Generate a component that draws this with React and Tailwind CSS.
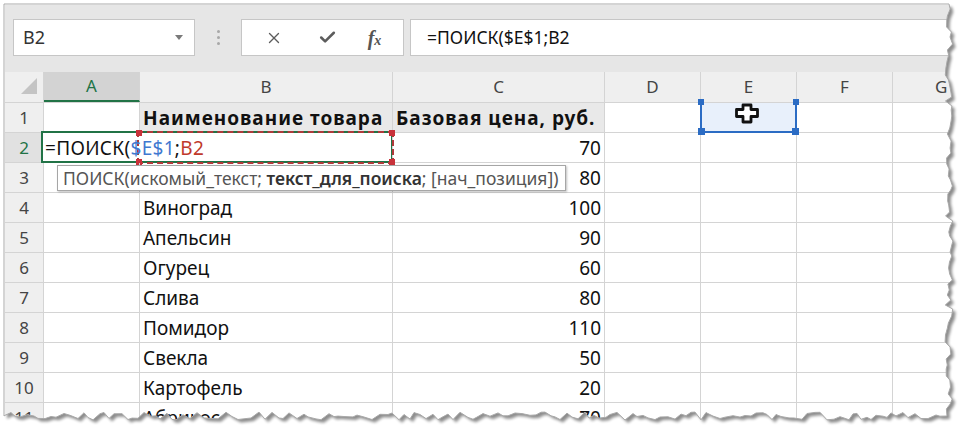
import React from 'react';
import { X, Check } from 'lucide-react';

const FONT = "font-['Noto_Sans',sans-serif]";

const rows = [
  { n: 1, b: 'Наименование товара', c: 'Базовая цена, руб.', head: true },
  { n: 2, b: '', c: '70' },
  { n: 3, b: '', c: '80' },
  { n: 4, b: 'Виноград', c: '100' },
  { n: 5, b: 'Апельсин', c: '90' },
  { n: 6, b: 'Огурец', c: '60' },
  { n: 7, b: 'Слива', c: '80' },
  { n: 8, b: 'Помидор', c: '110' },
  { n: 9, b: 'Свекла', c: '50' },
  { n: 10, b: 'Картофель', c: '20' },
  { n: 11, b: 'Абрикос', c: '70' },
];

// torn paper edge, deterministic jitter
function tornPath() {
  let s = 11;
  const rnd = () => {
    s = (s * 9301 + 49297) % 233280;
    return s / 233280;
  };
  const pts = [[4, 4], [949, 4]];
  for (let y = 9; y < 414; y += 4 + Math.floor(rnd() * 4)) {
    pts.push([945 + rnd() * 8, y]);
  }
  pts.push([947, 416]);
  for (let x = 940; x > 4; x -= 4 + Math.floor(rnd() * 5)) {
    pts.push([x, 412 + rnd() * 8]);
  }
  pts.push([4, 416]);
  return 'M' + pts.map((p) => p[0].toFixed(1) + ' ' + p[1].toFixed(1)).join(' L') + ' Z';
}

function Corner({ className }) {
  return <span className={`absolute ${className}`} />;
}

function ColHead({ label, w, active }) {
  return (
    <div
      className={`${w} h-full flex items-center justify-center border-r border-[#d4d4d4] text-[17px] ${
        active ? 'bg-[#d3d3d3] text-[#217346] border-b-2 border-b-[#217346]' : 'text-[#444]'
      }`}
    >
      {label}
    </div>
  );
}

function Row({ r }) {
  const cell = 'h-full border-r border-[#d4d4d4] relative';
  return (
    <div className="h-[30px] flex border-b border-[#d4d4d4] text-[19px] text-[#111]">
      <div
        className={`w-[39px] ${cell} flex items-center justify-center text-[17px] ${
          r.n === 2 ? 'bg-[#e1e1e1] text-[#217346]' : 'bg-[#efefef] text-[#444]'
        }`}
      >
        <span className="pt-[1px]">{r.n}</span>
      </div>

      {/* A */}
      <div className={`w-[96px] ${cell} ${r.n === 3 ? 'z-30' : ''}`}>
        {r.n === 2 && (
          <>
            <div className="absolute left-[-3px] top-[-2px] w-[352px] h-[32px] border-2 border-[#217346] bg-white z-[5]" />
            <div className="absolute left-[1px] top-0 h-full flex items-center pt-[1px] whitespace-nowrap tracking-[0.3px] z-[25]">
              =ПОИСК(<span className="text-[#3f78d0]">$E$1</span>;<span className="text-[#c0392b]">B2</span>
            </div>
          </>
        )}
        {r.n === 3 && (
          <div className="absolute left-[13px] top-[2px] h-[26px] w-[509px] flex items-center px-[5px] bg-white border border-[#a6a6a6] shadow-[1px_1px_2px_rgba(0,0,0,0.25)] text-[17.5px] text-[#555] whitespace-nowrap">
            <span>
              ПОИСК(искомый_текст; <b className="font-semibold text-[#333]">текст_для_поиска</b>; [нач_позиция])
            </span>
          </div>
        )}
      </div>

      {/* B */}
      <div
        className={`w-[253px] ${cell} flex items-center pl-[3px] pt-[1px] whitespace-nowrap ${
          r.head ? 'bg-[#e9e9e9] font-bold tracking-[1px]' : ''
        } ${r.n === 2 ? 'z-[15]' : ''}`}
      >
        {r.n === 2 ? (
          <div className="absolute left-[-3px] top-[-2px] right-[-2px] bottom-[-2px] border-2 border-dashed border-[#b03a3a]">
            <Corner className="left-[-3px] top-[-3px] w-[6px] h-[6px] bg-[#c8323a]" />
            <Corner className="right-[-3px] top-[-3px] w-[6px] h-[6px] bg-[#c8323a]" />
            <Corner className="left-[-3px] bottom-[-3px] w-[6px] h-[6px] bg-[#c8323a]" />
            <Corner className="right-[-3px] bottom-[-3px] w-[6px] h-[6px] bg-[#c8323a]" />
          </div>
        ) : (
          r.b
        )}
      </div>

      {/* C */}
      <div
        className={`w-[212px] ${cell} flex items-center pt-[1px] whitespace-nowrap ${
          r.head ? 'bg-[#e9e9e9] font-bold tracking-[1px] pl-[3px]' : 'justify-end pr-[3px]'
        }`}
      >
        {r.c}
      </div>

      <div className={`w-[96px] ${cell}`} />

      {/* E */}
      <div className={`w-[96px] ${cell} ${r.n === 1 ? 'bg-[#e8f0fb] z-10' : ''}`}>
        {r.n === 1 && (
          <div className="absolute left-[-1px] top-[-1px] right-[-1px] bottom-[-1px] border-l-2 border-r-2 border-b-2 border-[#2b6cc4]">
            <Corner className="left-[-4px] top-[-3px] w-[6px] h-[6px] bg-[#2b6cc4]" />
            <Corner className="right-[-4px] top-[-3px] w-[6px] h-[6px] bg-[#2b6cc4]" />
            <Corner className="left-[-4px] bottom-[-4px] w-[7px] h-[7px] bg-[#2b6cc4]" />
            <Corner className="right-[-4px] bottom-[-4px] w-[7px] h-[7px] bg-[#2b6cc4]" />
            <svg className="absolute left-[32px] top-[1px]" width="26" height="21" viewBox="0 0 26 21">
              <path
                d="M9 2 H17 V6.5 H23.5 V13.5 H17 V19 H9 V13.5 H2.5 V6.5 H9 Z"
                fill="#fff"
                stroke="#111"
                strokeWidth="2.8"
                strokeLinejoin="round"
              />
            </svg>
          </div>
        )}
      </div>
      <div className={`w-[96px] ${cell}`} />
      <div className="flex-1" />
    </div>
  );
}

export default function App() {
  const d = tornPath();
  return (
    <div className={`w-[960px] h-[431px] relative overflow-hidden bg-white ${FONT}`}>
      <div className="ml-[5px] mt-[5px] w-[955px] flex flex-col bg-white">
        {/* formula bar */}
        <div className="h-[67px] bg-[#e6e6e6] flex items-start pt-[14px]">
          <div className="ml-[8px] w-[182px] h-[37px] bg-white border border-[#c6c6c6] flex items-center justify-between pl-[9px] pr-[11px] text-[18px] text-[#333]">
            <span>B2</span>
            <span className="w-0 h-0 border-l-[4px] border-r-[4px] border-t-[5px] border-l-transparent border-r-transparent border-t-[#7a7a7a]" />
          </div>
          <div className="w-[46px] h-[37px] flex flex-col items-center justify-center gap-[3px]">
            <span className="w-[3px] h-[3px] rounded-full bg-[#a8a8a8]" />
            <span className="w-[3px] h-[3px] rounded-full bg-[#a8a8a8]" />
            <span className="w-[3px] h-[3px] rounded-full bg-[#a8a8a8]" />
          </div>
          <div className="w-[163px] h-[37px] bg-white border border-[#c6c6c6] flex items-center text-[#5c5c5c]">
            <div className="w-[60px] flex justify-center pl-[4px]">
              <X size={18} strokeWidth={1.8} />
            </div>
            <div className="w-[50px] flex justify-center">
              <Check size={19} strokeWidth={3.2} />
            </div>
            <div className="w-[45px] flex justify-center font-['Liberation_Serif',serif] italic font-bold text-[20px] leading-none text-[#555]">
              f<span className="text-[14px] self-end">x</span>
            </div>
          </div>
          <div className="ml-[6px] flex-1 h-[37px] bg-white border border-[#c6c6c6] flex items-center pl-[16px] text-[17.5px] text-[#111]">
            =ПОИСК($E$1;B2
          </div>
        </div>

        {/* column headers */}
        <div className="h-[31px] flex bg-[#efefef] border-b border-[#d4d4d4]">
          <div className="w-[39px] h-full border-r border-[#d4d4d4] relative">
            <svg className="absolute left-[15px] top-[5px]" width="18" height="18" viewBox="0 0 18 18">
              <path d="M17 1 V17 H1 Z" fill="#c4c4c4" />
            </svg>
          </div>
          <ColHead label="A" w="w-[96px]" active />
          <ColHead label="B" w="w-[253px]" />
          <ColHead label="C" w="w-[212px]" />
          <ColHead label="D" w="w-[96px]" />
          <ColHead label="E" w="w-[96px]" />
          <ColHead label="F" w="w-[96px]" />
          <div className="flex-1 flex items-center pl-[42px] text-[17px] text-[#444]">G</div>
        </div>

        {rows.map((r) => (
          <Row key={r.n} r={r} />
        ))}
      </div>

      {/* torn paper edge */}
      <svg className="absolute inset-0 z-50 pointer-events-none" width="960" height="431" viewBox="0 0 960 431">
        <defs>
          <mask id="outside">
            <rect width="960" height="431" fill="#fff" />
            <path d={d} fill="#000" />
          </mask>
          <filter id="blur" x="-5%" y="-5%" width="110%" height="110%">
            <feGaussianBlur stdDeviation="1.5" />
          </filter>
        </defs>
        <path d={'M0 0 H960 V431 H0 Z ' + d} fill="#fff" fillRule="evenodd" />
        <g mask="url(#outside)">
          <path d={d} transform="translate(3 3)" fill="#000" opacity="0.45" filter="url(#blur)" />
        </g>
        <path d={d} fill="none" stroke="#a9a9a9" strokeWidth="1" />
      </svg>
    </div>
  );
}
